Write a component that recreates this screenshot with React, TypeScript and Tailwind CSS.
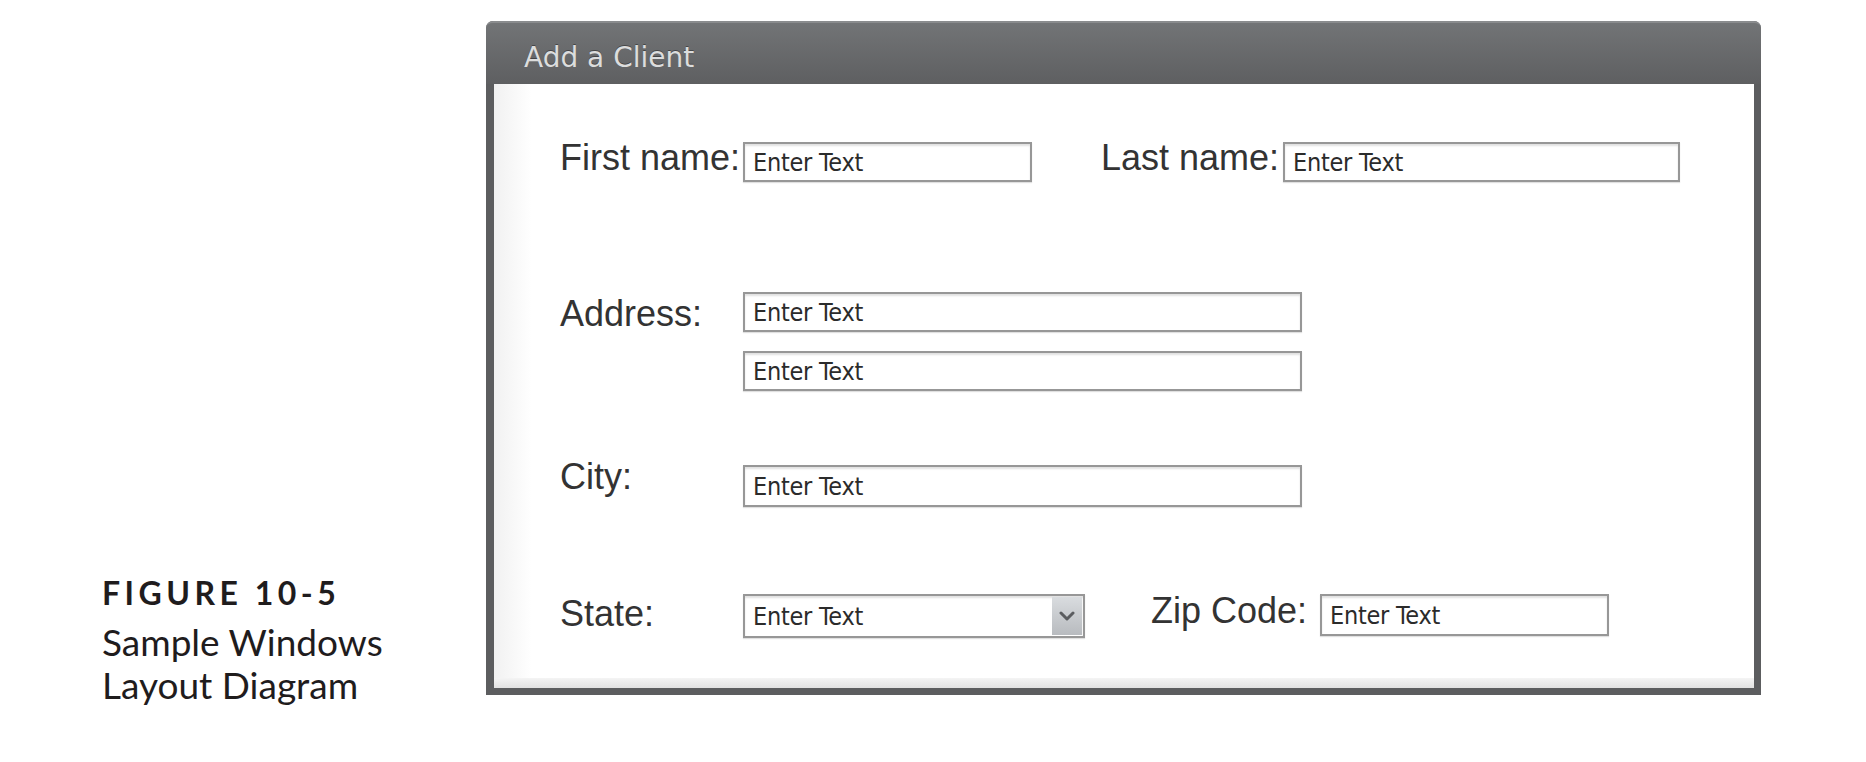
import type { ReactNode } from 'react'

const labelFont = "font-['Liberation_Sans',Arial,sans-serif]"
const fieldFont = "font-['DejaVu_Sans_Condensed','Liberation_Sans_Narrow','Liberation_Sans',sans-serif]"

function TextBox({ className = '' }: { className?: string }) {
  return (
    <div
      className={`flex items-center border-2 border-[#979797] bg-white pl-[8px] shadow-[inset_0_2px_2px_rgba(0,0,0,0.12),0_1px_1px_rgba(0,0,0,0.12)] ${className}`}
    >
      <span className={`${fieldFont} text-[25px] leading-none text-[#2b2b2b] tracking-[-0.01em]`}>Enter Text</span>
    </div>
  )
}

function Label({ children, className = '' }: { children: ReactNode; className?: string }) {
  return (
    <span className={`${labelFont} shrink-0 text-[36px] leading-[36px] text-[#333] ${className}`}>
      {children}
    </span>
  )
}

function SelectBox() {
  return (
    <div className="flex h-[44px] w-[342px] items-stretch border-2 border-[#979797] bg-white shadow-[inset_0_2px_2px_rgba(0,0,0,0.12),0_1px_1px_rgba(0,0,0,0.12)]">
      <div className="flex flex-1 items-center pl-[8px]">
        <span className={`${fieldFont} text-[25px] leading-none text-[#2b2b2b] tracking-[-0.01em]`}>Enter Text</span>
      </div>
      <div className="my-[1px] mr-[1px] flex w-[30px] items-center justify-center bg-gradient-to-b from-[#d9dcdf] to-[#b8bbbf]">
        <svg width="16" height="12" viewBox="0 0 16 12" fill="none">
          <path d="M2 3l6 6 6-6" stroke="#5b5d60" strokeWidth="3" strokeLinecap="round" strokeLinejoin="round" />
        </svg>
      </div>
    </div>
  )
}

export default function App() {
  return (
    <div className="flex h-[762px] w-[1866px] bg-white pt-[21px]">
      {/* figure caption */}
      <div className="w-[486px] shrink-0 pl-[102px] pt-[555px] text-[#1f1c1d]">
        <div className="font-['Lato',sans-serif] text-[32px] font-bold leading-[33px] tracking-[0.14em]">FIGURE 10-5</div>
        <div className="mt-[11px] font-['Lato',sans-serif] text-[37px] leading-[43px]">
          Sample Windows
          <br />
          Layout Diagram
        </div>
      </div>

      {/* window */}
      <div className="flex h-[674px] w-[1275px] flex-col rounded-t-[7px] bg-[#5c5d5f]">
        <div className="flex h-[63px] items-center rounded-t-[7px] border-t-2 border-[#8a8c8e] bg-gradient-to-b from-[#727476] to-[#5e5f61] pl-[38px] pt-[8px]">
          <span className="font-['DejaVu_Sans',sans-serif] text-[28px] text-[#dcdddd] [text-shadow:0_-1px_0_rgba(0,0,0,0.35)]">
            Add a Client
          </span>
        </div>

        <div className="ml-[8px] mr-[7px] mb-[7px] flex flex-1 flex-col bg-white">
          <div className="flex flex-1 flex-col bg-gradient-to-r from-[#f1f1f1] via-white via-[3%] to-white pl-[66px]">
            {/* name row */}
            <div className="mt-[58px] flex items-start">
              <Label className="-mt-[2px] w-[183px]">First name:</Label>
              <TextBox className="h-[40px] w-[289px]" />
              <Label className="-mt-[2px] ml-[69px] w-[182px]">Last name:</Label>
              <TextBox className="h-[40px] w-[397px]" />
            </div>

            {/* address */}
            <div className="mt-[110px] flex items-start">
              <Label className="mt-[4px] w-[183px]">Address:</Label>
              <div className="flex flex-col gap-[19px]">
                <TextBox className="h-[40px] w-[559px]" />
                <TextBox className="h-[40px] w-[559px]" />
              </div>
            </div>

            {/* city */}
            <div className="mt-[74px] flex items-start">
              <Label className="-mt-[6px] w-[183px]">City:</Label>
              <TextBox className="h-[42px] w-[559px]" />
            </div>

            {/* state + zip */}
            <div className="mt-[87px] flex items-start">
              <Label className="mt-[2px] w-[183px]">State:</Label>
              <SelectBox />
              <Label className="-mt-[1px] ml-[66px] w-[169px]">Zip Code:</Label>
              <TextBox className="h-[42px] w-[289px]" />
            </div>
          </div>
          <div className="h-[10px] bg-gradient-to-b from-[#f4f4f4] to-[#e2e2e2]" />
        </div>
      </div>
    </div>
  )
}
